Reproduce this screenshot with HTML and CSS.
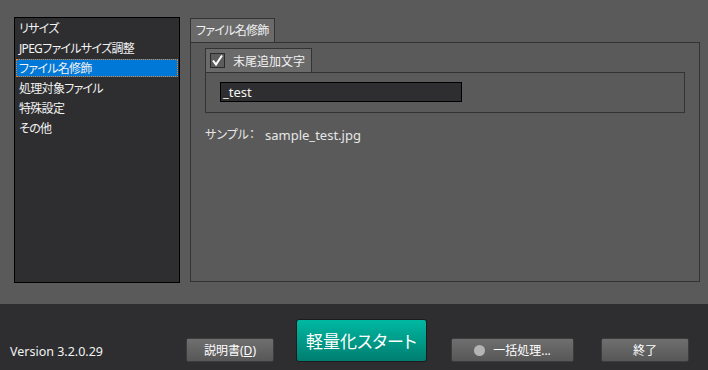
FILE: index.html
```html
<!DOCTYPE html>
<html>
<head>
	<meta http-equiv="Content-Type" content="text/html; charset=utf-8"/>
	<title>軽量化</title>
	<link rel="stylesheet" href="styles.css">
</head>
<body>
<div class="main">
	<ul class="menu">
		<li>リサイズ</li>
		<li>JPEGファイルサイズ調整</li>
		<li class="sel">ファイル名修飾</li>
		<li>処理対象ファイル</li>
		<li>特殊設定</li>
		<li>その他</li>
	</ul>
	<div class="tabs">
		<div class="tab_head"><span class="tab">ファイル名修飾</span></div>
		<div class="tab_body">
			<div class="group">
				<div class="group_head">
					<span class="chk"><svg width="15" height="15" viewBox="0 0 15 15"><rect x="0.5" y="0.5" width="14" height="14" fill="#5c5c5c" stroke="#2a2a2a"/><path d="M3 7.5 L6 11.5 L12 2.5" fill="none" stroke="#fff" stroke-width="2"/></svg></span>
					<span>末尾追加文字</span>
				</div>
				<div class="group_body">
					<div class="edit">_test</div>
				</div>
			</div>
			<div class="sample"><span class="lbl">サンプル：</span><span>sample_test.jpg</span></div>
		</div>
	</div>
</div>
<div class="bar">
	<span class="ver">Version 3.2.0.29</span>
	<span class="btn b_help">説明書(<u>D</u>)</span>
	<span class="btn_go">軽量化スタート</span>
	<span class="btn b_batch"><i class="dot"></i>一括処理...</span>
	<span class="btn b_end">終了</span>
</div>
</body>
</html>
```

FILE: styles.css
```css
/* =====reset===== */
body, div, span, ul, li { padding: 0; margin: 0; }
ul { list-style: none; }

/* =====public===== */
body { background: #5a5a5a; color: #f2f2f2; font-size: 12px; font-family: "Noto Sans", "Noto Sans CJK JP", sans-serif; font-feature-settings: "palt"; width: 708px; height: 370px; overflow: hidden; }

.main { display: flex; height: 304px; padding: 17px 0 0 14px; box-sizing: border-box; }

.menu { width: 166px; height: 266px; box-sizing: border-box; background: #2e2e30; border: 1px solid #000; padding-top: 1px; letter-spacing: -0.7px; }
.menu li { height: 18px; line-height: 18px; margin-bottom: 2px; padding-left: 2px; margin-left: 1px; margin-right: 1px; border: 1px dotted transparent; box-sizing: border-box; white-space: nowrap; }
.menu li.sel { background: #0078d7; border-color: #f08020; }

.tabs { margin-left: 10px; width: 510px; }
.tab_head { height: 25px; display: flex; align-items: flex-end; }
.tab { display: block; height: 24px; line-height: 24px; padding: 0 5px; background: #6a6a6a; border: 1px solid #333; border-bottom: 0; box-sizing: border-box; white-space: nowrap; letter-spacing: -0.7px; }
.tab_body { height: 240px; border: 1px solid #333; box-sizing: border-box; padding: 5px 14px 0 14px; }

.group_head { display: inline-flex; align-items: center; height: 24px; background: #6a6a6a; border: 1px solid #333; border-bottom: 0; box-sizing: border-box; padding: 0 6px 0 4px; white-space: nowrap; }
.chk { display: flex; margin-right: 8px; }
.chk svg { display: block; }
.group_body { height: 41px; border: 1px solid #333; box-sizing: border-box; padding: 9px 0 0 14px; }
.edit { width: 242px; height: 20px; line-height: 18px; box-sizing: border-box; background: #2e2e30; border: 1px solid #000; padding-left: 2px; font-size: 13px; }

.sample { display: flex; margin-top: 12px; font-size: 13px; color: #e6e6e6; line-height: 20px; white-space: nowrap; }
.sample .lbl { width: 60px; font-size: 12px; flex: none; }

.bar { height: 66px; background: #2e2e30; display: flex; align-items: flex-end; padding: 0 0 8px 10px; box-sizing: border-box; }
.ver { font-size: 12.5px; color: #f2f2f2; width: 93px; margin-bottom: 2px; white-space: nowrap; }
.btn { display: flex; align-items: center; justify-content: center; height: 24px; box-sizing: border-box; background: linear-gradient(#6f6f6f, #575757); border: 1px solid #3c3c3c; border-radius: 2px; color: #fff; }
.b_help { width: 88px; margin-left: 83px; }
.b_batch { width: 123px; margin-left: 24px; }
.b_end { width: 88px; margin-left: 27px; }
.btn_go { display: flex; align-items: center; justify-content: center; width: 131px; height: 43px; box-sizing: border-box; margin-left: 22px; background: linear-gradient(#00b9a2, #007d70); border: 1px solid #1c1c1c; border-radius: 3px; font-size: 17px; color: #fff; }
.dot { display: block; width: 11px; height: 11px; border-radius: 50%; background: #b4b4b4; margin-right: 8px; }
```
